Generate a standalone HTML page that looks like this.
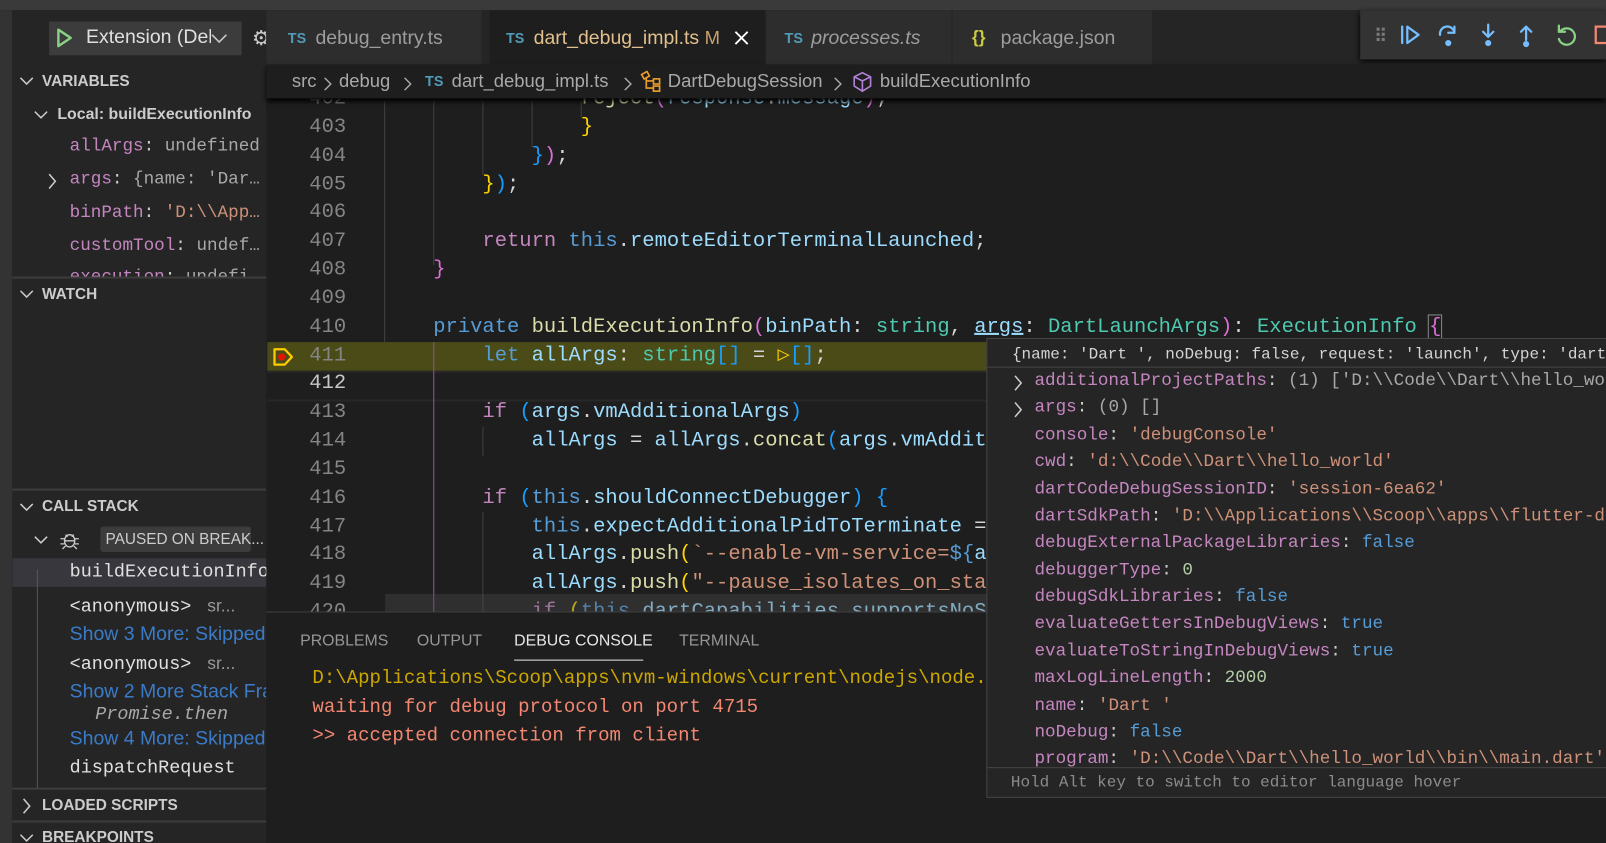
<!DOCTYPE html>
<html><head><meta charset="utf-8"><style>
html,body{margin:0;padding:0;width:1606px;height:843px;overflow:hidden;background:#1e1e1e}
#root{position:absolute;left:0;top:0;width:1568px;height:823px;transform:scale(1.02423);transform-origin:0 0;overflow:hidden;background:#1e1e1e;font-family:"Liberation Sans",sans-serif;color:#ccc}
.a{position:absolute;white-space:pre}
.m{font-family:"Liberation Mono",monospace}
.code{position:absolute;left:375px;font-family:"Liberation Mono",monospace;font-size:20px;line-height:28px;height:28px;white-space:pre;color:#d4d4d4}
.ln{position:absolute;left:270px;width:68px;text-align:right;font-family:"Liberation Mono",monospace;font-size:20px;line-height:28px;color:#858585}
.k{color:#569cd6}.c{color:#c586c0}.v{color:#9cdcfe}.f{color:#dcdcaa}.t{color:#4ec9b0}.s{color:#ce9178}.n{color:#b5cea8}
.b1{color:#ffd700}.b2{color:#da70d6}.b3{color:#179fff}
.hd{font-weight:bold;font-size:15px;color:#ccc}
.hr{position:absolute;left:1010px;font-family:"Liberation Mono",monospace;font-size:17.2px;line-height:22px;white-space:pre;color:#ccc}
.hn{color:#c586c0}
.sv{position:absolute;font-family:"Liberation Mono",monospace;font-size:17.2px;line-height:22px;white-space:pre}
.lk{color:#3a7bc8;font-size:19px;font-family:"Liberation Sans",sans-serif}
</style></head><body><div id="root">

<div class="a" style="left:0;top:0;width:1568px;height:10px;background:#3a3a3a"></div>
<div class="a" style="left:0;top:10px;width:12px;height:813px;background:#333"></div>
<div class="a" style="left:12px;top:10px;width:248px;height:813px;background:#252526;overflow:hidden">
<div style="position:absolute;left:-12px;top:-10px;width:300px;height:823px">
<div class="a" style="left:48px;top:21px;width:188px;height:33px;background:#3c3c3c"></div>
<svg class="a" style="left:55px;top:27px" width="16" height="20"><path d="M2 2 L14 10 L2 18 Z" fill="none" stroke="#89d185" stroke-width="2.4" stroke-linejoin="round"/></svg>
<div class="a" style="left:84px;top:26px;font-size:19px;color:#e0e0e0;width:122px;overflow:hidden">Extension (Del</div>
<svg class="a" style="left:206px;top:32px" width="16" height="12"><path d="M1 2 L8 9 L15 2" fill="none" stroke="#ccc" stroke-width="1.5"/></svg>
<div class="a" style="left:246px;top:25px;font-size:20px;color:#ccc">⚙</div>

<svg class="a" style="left:19px;top:74px" width="14" height="10"><path d="M1 2 L7 8 L13 2" fill="none" stroke="#ccc" stroke-width="1.5"/></svg>
<div class="a hd" style="left:41px;top:71px">VARIABLES</div>
<svg class="a" style="left:33px;top:107px" width="14" height="10"><path d="M1 2 L7 8 L13 2" fill="none" stroke="#ccc" stroke-width="1.5"/></svg>
<div class="a hd" style="left:56px;top:103px;font-size:15.5px">Local: buildExecutionInfo</div>
<div class="sv" style="left:68px;top:133px"><span class="hn">allArgs</span><span style="color:#ccc">: </span><span style="color:#a8a8a8">undefined</span></div>
<svg class="a" style="left:46px;top:169px" width="10" height="16"><path d="M2 1 L8 8 L2 15" fill="none" stroke="#ccc" stroke-width="1.5"/></svg>
<div class="sv" style="left:68px;top:165px"><span class="hn">args</span><span style="color:#ccc">: </span><span style="color:#a8a8a8">{name: 'Dar…</span></div>
<div class="sv" style="left:68px;top:198px"><span class="hn">binPath</span><span style="color:#ccc">: </span><span class="s">'D:\\App…</span></div>
<div class="sv" style="left:68px;top:230px"><span class="hn">customTool</span><span style="color:#ccc">: </span><span style="color:#a8a8a8">undef…</span></div>
<div class="a" style="left:12px;top:255px;width:248px;height:15px;overflow:hidden"><div class="sv" style="left:56px;top:6px"><span class="hn">execution</span>: <span style="color:#a8a8a8">undefi…</span></div></div>
<div class="a" style="left:12px;top:270px;width:248px;height:2px;background:#3c3c3c"></div>
<svg class="a" style="left:19px;top:282px" width="14" height="10"><path d="M1 2 L7 8 L13 2" fill="none" stroke="#ccc" stroke-width="1.5"/></svg>
<div class="a hd" style="left:41px;top:279px">WATCH</div>
<div class="a" style="left:12px;top:477px;width:248px;height:2px;background:#3c3c3c"></div>
<svg class="a" style="left:19px;top:490px" width="14" height="10"><path d="M1 2 L7 8 L13 2" fill="none" stroke="#ccc" stroke-width="1.5"/></svg>
<div class="a hd" style="left:41px;top:486px">CALL STACK</div>
<svg class="a" style="left:33px;top:522px" width="14" height="10"><path d="M1 2 L7 8 L13 2" fill="none" stroke="#ccc" stroke-width="1.5"/></svg>
<svg class="a" style="left:57px;top:516px" width="22" height="22"><g fill="none" stroke="#ccc" stroke-width="1.3"><ellipse cx="11" cy="12" rx="5" ry="6"/><path d="M7 6 L9 8 M15 6 L13 8 M2 10 H6 M16 10 H20 M2 15 H6 M16 15 H20 M4 20 L7 17 M18 20 L15 17 M6 12 H16"/></g></svg>
<div class="a" style="left:98px;top:514px;width:147px;height:25px;background:#3c3c3c;border-radius:3px"></div>
<div class="a" style="left:103px;top:518px;font-size:15px;color:#ccc">PAUSED ON BREAK...</div>
<div class="a" style="left:12px;top:545px;width:248px;height:28px;background:#37373d"></div>
<div class="a" style="left:36px;top:556px;width:1px;height:214px;background:#585858"></div>
<div class="sv" style="left:68px;top:548px;font-size:18px;color:#e0e0e0">buildExecutionInfo</div>
<div class="sv" style="left:68px;top:581px;font-size:18px;color:#e0e0e0">&lt;anonymous&gt; <span style="color:#999;font-family:'Liberation Sans',sans-serif;font-size:17px"> sr...</span></div>
<div class="a lk" style="left:68px;top:609px">Show 3 More: Skipped</div>
<div class="sv" style="left:68px;top:637px;font-size:18px;color:#e0e0e0">&lt;anonymous&gt; <span style="color:#999;font-family:'Liberation Sans',sans-serif;font-size:17px"> sr...</span></div>
<div class="a lk" style="left:68px;top:665px">Show 2 More Stack Frames</div>
<div class="sv" style="left:93px;top:687px;font-size:18px;color:#a8a8a8;font-style:italic">Promise.then</div>
<div class="a lk" style="left:68px;top:711px">Show 4 More: Skipped</div>
<div class="sv" style="left:68px;top:739px;font-size:18px;color:#e0e0e0">dispatchRequest</div>
<div class="a" style="left:12px;top:769px;width:248px;height:2px;background:#3c3c3c"></div>
<svg class="a" style="left:21px;top:779px" width="10" height="16"><path d="M2 1 L8 8 L2 15" fill="none" stroke="#ccc" stroke-width="1.5"/></svg>
<div class="a hd" style="left:41px;top:778px">LOADED SCRIPTS</div>
<div class="a" style="left:12px;top:801px;width:248px;height:2px;background:#3c3c3c"></div>
<svg class="a" style="left:19px;top:813px" width="14" height="10"><path d="M1 2 L7 8 L13 2" fill="none" stroke="#ccc" stroke-width="1.5"/></svg>
<div class="a hd" style="left:41px;top:809px">BREAKPOINTS</div>
</div></div>

<div class="a" style="left:260px;top:10px;width:1308px;height:53px;background:#252526"></div>
<div class="a" style="left:260px;top:10px;width:210px;height:53px;background:#2d2d2d"></div>
<div class="a" style="left:478px;top:10px;width:269px;height:53px;background:#1e1e1e"></div>
<div class="a" style="left:748px;top:10px;width:181px;height:53px;background:#2d2d2d"></div>
<div class="a" style="left:930px;top:10px;width:195px;height:53px;background:#2d2d2d"></div>
<div class="a" style="left:281px;top:29px;font-size:14px;font-weight:bold;color:#519aba">TS</div>
<div class="a" style="left:308px;top:27px;font-size:19px;color:#9d9d9d">debug_entry.ts</div>
<div class="a" style="left:494px;top:29px;font-size:14px;font-weight:bold;color:#519aba">TS</div>
<div class="a" style="left:521px;top:27px;font-size:19px;color:#e2c08d">dart_debug_impl.ts</div>
<div class="a" style="left:688px;top:27px;font-size:18px;color:#c8a26f">M</div>
<svg class="a" style="left:717px;top:30px" width="14" height="14"><path d="M1 1 L13 13 M13 1 L1 13" stroke="#fff" stroke-width="1.8"/></svg>
<div class="a" style="left:766px;top:29px;font-size:14px;font-weight:bold;color:#519aba">TS</div>
<div class="a" style="left:792px;top:27px;font-size:19px;color:#9d9d9d;font-style:italic">processes.ts</div>
<div class="a" style="left:949px;top:27px;font-size:17px;font-weight:bold;color:#cbcb41">{}</div>
<div class="a" style="left:977px;top:27px;font-size:19px;color:#9d9d9d">package.json</div>

<div class="a" style="left:1328px;top:10px;width:240px;height:48px;background:#333;box-shadow:0 2px 6px #000"></div>
<svg class="a" style="left:1340px;top:22px" width="228" height="26">
<g fill="#7a7a7a"><rect x="4" y="5" width="3" height="3"/><rect x="9" y="5" width="3" height="3"/><rect x="4" y="10" width="3" height="3"/><rect x="9" y="10" width="3" height="3"/><rect x="4" y="15" width="3" height="3"/><rect x="9" y="15" width="3" height="3"/></g>
<g fill="none" stroke="#75beff" stroke-width="2.2" stroke-linecap="round" stroke-linejoin="round">
<path d="M29 4 V20"/><path d="M34 4 L45 12 L34 20 Z"/>
<path d="M66 12 A7 7 0 0 1 80 10"/><path d="M80 4 V10 H74"/>
<path d="M113 2 V14 M108 9 L113 14 L118 9"/>
<path d="M150 17 V4 M145 9 L150 4 L155 9"/>
</g>
<g fill="#75beff"><circle cx="74" cy="20" r="3"/><circle cx="113" cy="20" r="3"/><circle cx="150" cy="21" r="3"/></g>
<g fill="none" stroke="#89d185" stroke-width="2.2" stroke-linecap="round"><path d="M184 8 A8 8 0 1 1 182 16"/><path d="M182 3 V9 H188"/></g>
<rect x="218" y="4" width="12" height="16" fill="none" stroke="#f48771" stroke-width="2.2"/>
</svg>

<div class="a" style="left:260px;top:63px;width:1308px;height:33px;background:#1e1e1e;box-shadow:0 3px 5px #000;z-index:3">
<div class="a" style="left:25px;top:6px;font-size:18px;color:#a9a9a9">src</div>
<svg class="a" style="left:55px;top:12px" width="10" height="14"><path d="M2 1 L8 7 L2 13" fill="none" stroke="#a9a9a9" stroke-width="1.4"/></svg>
<div class="a" style="left:71px;top:6px;font-size:18px;color:#a9a9a9">debug</div>
<svg class="a" style="left:133px;top:12px" width="10" height="14"><path d="M2 1 L8 7 L2 13" fill="none" stroke="#a9a9a9" stroke-width="1.4"/></svg>
<div class="a" style="left:155px;top:8px;font-size:14px;font-weight:bold;color:#519aba">TS</div>
<div class="a" style="left:181px;top:6px;font-size:18px;color:#a9a9a9">dart_debug_impl.ts</div>
<svg class="a" style="left:348px;top:12px" width="10" height="14"><path d="M2 1 L8 7 L2 13" fill="none" stroke="#a9a9a9" stroke-width="1.4"/></svg>
<svg class="a" style="left:365px;top:6px" width="22" height="22"><g fill="none" stroke="#ee9d28" stroke-width="1.6"><rect x="2" y="2" width="6" height="5" transform="rotate(-30 5 4)"/><rect x="13" y="8" width="6" height="5"/><rect x="13" y="15" width="6" height="5"/><path d="M6 7 V17 H13 M6 10 H13"/></g></svg>
<div class="a" style="left:392px;top:6px;font-size:18px;color:#a9a9a9">DartDebugSession</div>
<svg class="a" style="left:553px;top:12px" width="10" height="14"><path d="M2 1 L8 7 L2 13" fill="none" stroke="#a9a9a9" stroke-width="1.4"/></svg>
<svg class="a" style="left:572px;top:6px" width="20" height="22"><g fill="none" stroke="#b180d7" stroke-width="1.6" stroke-linejoin="round"><path d="M10 2 L18 6 V15 L10 20 L2 15 V6 Z"/><path d="M2 6 L10 10 L18 6 M10 10 V20"/></g></svg>
<div class="a" style="left:599px;top:6px;font-size:18px;color:#a9a9a9">buildExecutionInfo</div>
</div>

<div class="a" style="left:260px;top:96px;width:1308px;height:501px;overflow:hidden">
<div style="position:absolute;left:-260px;top:-93px;width:1568px;height:823px">
<div class="a" style="left:261px;top:331px;width:714px;height:28px;background:#4b4b18"></div>
<div class="a" style="left:261px;top:359px;width:800px;height:26px;border-top:2px solid #282828;border-bottom:2px solid #282828"></div>
<div class="a" style="left:375px;top:96px;width:1px;height:235px;background:#404040"></div>
<div class="a" style="left:423px;top:96px;width:1px;height:160px;background:#404040"></div>
<div class="a" style="left:471px;top:96px;width:1px;height:72px;background:#404040"></div>
<div class="a" style="left:519px;top:96px;width:1px;height:45px;background:#404040"></div>
<div class="a" style="left:567px;top:96px;width:1px;height:16px;background:#404040"></div>
<div class="a" style="left:423px;top:331px;width:1px;height:270px;background:#a14a9e"></div>
<div class="a" style="left:471px;top:414px;width:1px;height:28px;background:#404040"></div>
<div class="a" style="left:471px;top:497px;width:1px;height:110px;background:#404040"></div>

<div class="ln" style="top:80px">402</div>
<div class="ln" style="top:108px">403</div>
<div class="ln" style="top:136px">404</div>
<div class="ln" style="top:164px">405</div>
<div class="ln" style="top:191px">406</div>
<div class="ln" style="top:219px">407</div>
<div class="ln" style="top:247px">408</div>
<div class="ln" style="top:275px">409</div>
<div class="ln" style="top:303px">410</div>
<div class="ln" style="top:331px">411</div>
<div class="ln" style="top:358px;color:#c6c6c6">412</div>
<div class="ln" style="top:386px">413</div>
<div class="ln" style="top:414px">414</div>
<div class="ln" style="top:442px">415</div>
<div class="ln" style="top:470px">416</div>
<div class="ln" style="top:498px">417</div>
<div class="ln" style="top:525px">418</div>
<div class="ln" style="top:553px">419</div>
<div class="ln" style="top:581px">420</div>
<svg class="a" style="left:266px;top:336px" width="22" height="19"><path d="M2 2 H12 L19 9.5 L12 17 H2 Z" fill="none" stroke="#ffcc00" stroke-width="2.2" stroke-linejoin="round"/><circle cx="9" cy="9.5" r="3.5" fill="#e51400"/></svg>

<div class="code" style="top:80px">                <span class="f">reject</span><span class="b2">(</span><span class="v">response</span>.<span class="v">message</span><span class="b2">)</span>;</div>
<div class="code" style="top:108px">                <span class="b1">}</span></div>
<div class="code" style="top:136px">            <span class="b3">}</span><span class="b2">)</span>;</div>
<div class="code" style="top:164px">        <span class="b1">}</span><span class="b3">)</span>;</div>
<div class="code" style="top:219px">        <span class="c">return</span> <span class="k">this</span>.<span class="v">remoteEditorTerminalLaunched</span>;</div>
<div class="code" style="top:247px">    <span class="b2">}</span></div>
<div class="code" style="top:303px">    <span class="k">private</span> <span class="f">buildExecutionInfo</span><span class="b2">(</span><span class="v">binPath</span>: <span class="t">string</span>, <span class="v" style="text-decoration:underline">args</span>: <span class="t">DartLaunchArgs</span><span class="b2">)</span>: <span class="t">ExecutionInfo</span> <span class="b2" style="outline:1px solid #888">{</span></div>
<div class="code" style="top:331px">        <span class="k">let</span> <span class="v">allArgs</span>: <span class="t">string</span><span class="b3">[]</span> = <span style="color:#ffcc00">▷</span><span class="b3">[]</span>;</div>
<div class="code" style="top:386px">        <span class="c">if</span> <span class="b3">(</span><span class="v">args</span>.<span class="v">vmAdditionalArgs</span><span class="b3">)</span></div>
<div class="code" style="top:414px">            <span class="v">allArgs</span> = <span class="v">allArgs</span>.<span class="f">concat</span><span class="b3">(</span><span class="v">args</span>.<span class="v">vmAdditionalArgs</span><span class="b3">)</span>;</div>
<div class="code" style="top:470px">        <span class="c">if</span> <span class="b3">(</span><span class="k">this</span>.<span class="v">shouldConnectDebugger</span><span class="b3">)</span> <span class="b3">{</span></div>
<div class="code" style="top:498px">            <span class="k">this</span>.<span class="v">expectAdditionalPidToTerminate</span> = <span class="k">true</span>;</div>
<div class="code" style="top:525px">            <span class="v">allArgs</span>.<span class="f">push</span><span class="b1">(</span><span class="s">`--enable-vm-service=</span><span class="k">${</span><span class="v">allow</span><span class="k">}</span><span class="s">`</span><span class="b1">)</span>;</div>
<div class="code" style="top:553px">            <span class="v">allArgs</span>.<span class="f">push</span><span class="b1">(</span><span class="s">"--pause_isolates_on_start=true"</span><span class="b1">)</span>;</div>
<div class="code" style="top:581px">            <span class="c">if</span> <span class="b1">(</span><span class="k">this</span>.<span class="v">dartCapabilities</span>.<span class="v">supportsNoServeDevTools</span><span class="b1">)</span></div>
<div class="a" style="left:376px;top:577px;width:1192px;height:20px;background:rgba(80,80,80,.35)"></div>
</div></div>

<div class="a" style="left:260px;top:597px;width:1308px;height:226px;background:#1e1e1e;border-top:1px solid #414141"></div>
<div class="a" style="left:293px;top:617px;font-size:15.5px;color:#969696">PROBLEMS</div>
<div class="a" style="left:407px;top:617px;font-size:15.5px;color:#969696">OUTPUT</div>
<div class="a" style="left:502px;top:617px;font-size:15.5px;color:#e7e7e7">DEBUG CONSOLE</div>
<div class="a" style="left:502px;top:644px;width:126px;height:1px;background:#e7e7e7"></div>
<div class="a" style="left:663px;top:617px;font-size:15.5px;color:#969696">TERMINAL</div>
<div class="a m" style="left:305px;top:651px;font-size:18.6px;line-height:24px;color:#cca700">D:\Applications\Scoop\apps\nvm-windows\current\nodejs\node.exe</div>
<div class="a m" style="left:305px;top:679px;font-size:18.6px;line-height:24px;color:#f48771">waiting for debug protocol on port 4715</div>
<div class="a m" style="left:305px;top:707px;font-size:18.6px;line-height:24px;color:#f48771">&gt;&gt; accepted connection from client</div>

<div class="a" style="left:963px;top:330px;width:620px;height:447px;background:#252526;border:1px solid #454545;overflow:hidden;z-index:5">
<div style="position:absolute;left:-964px;top:-331px;width:1568px;height:823px">
<div class="a m" style="left:988px;top:335px;font-size:15.6px;line-height:22px;color:#d4d4d4">{name: 'Dart ', noDebug: false, request: 'launch', type: 'dart'}</div>
<div class="a" style="left:964px;top:358px;width:620px;height:1px;background:#454545"></div>
<svg class="a" style="left:989px;top:366px" width="10" height="16"><path d="M2 1 L8 8 L2 15" fill="none" stroke="#ccc" stroke-width="1.5"/></svg>
<div class="hr" style="top:362px"><span class="hn">additionalProjectPaths</span>: <span style="color:#a8a8a8">(1) ['D:\\Code\\Dart\\hello_world']</span></div>
<svg class="a" style="left:989px;top:392px" width="10" height="16"><path d="M2 1 L8 8 L2 15" fill="none" stroke="#ccc" stroke-width="1.5"/></svg>
<div class="hr" style="top:388px"><span class="hn">args</span>: <span style="color:#a8a8a8">(0) []</span></div>
<div class="hr" style="top:415px"><span class="hn">console</span>: <span class="s">'debugConsole'</span></div>
<div class="hr" style="top:441px"><span class="hn">cwd</span>: <span class="s">'d:\\Code\\Dart\\hello_world'</span></div>
<div class="hr" style="top:468px"><span class="hn">dartCodeDebugSessionID</span>: <span class="s">'session-6ea62'</span></div>
<div class="hr" style="top:494px"><span class="hn">dartSdkPath</span>: <span class="s">'D:\\Applications\\Scoop\\apps\\flutter-dev'</span></div>
<div class="hr" style="top:520px"><span class="hn">debugExternalPackageLibraries</span>: <span class="k">false</span></div>
<div class="hr" style="top:547px"><span class="hn">debuggerType</span>: <span class="n">0</span></div>
<div class="hr" style="top:573px"><span class="hn">debugSdkLibraries</span>: <span class="k">false</span></div>
<div class="hr" style="top:599px"><span class="hn">evaluateGettersInDebugViews</span>: <span class="k">true</span></div>
<div class="hr" style="top:626px"><span class="hn">evaluateToStringInDebugViews</span>: <span class="k">true</span></div>
<div class="hr" style="top:652px"><span class="hn">maxLogLineLength</span>: <span class="n">2000</span></div>
<div class="hr" style="top:679px"><span class="hn">name</span>: <span class="s">'Dart '</span></div>
<div class="hr" style="top:705px"><span class="hn">noDebug</span>: <span class="k">false</span></div>
<div class="a" style="left:964px;top:731px;width:620px;height:18px;overflow:hidden"><div class="hr" style="left:46px;top:0px"><span class="hn">program</span>: <span class="s">'D:\\Code\\Dart\\hello_world\\bin\\main.dart'</span></div></div>
<div class="a" style="left:964px;top:749px;width:620px;height:1px;background:#454545"></div>
<div class="a m" style="left:987px;top:754px;font-size:15.6px;line-height:20px;color:#8b8b8b">Hold Alt key to switch to editor language hover</div>
</div></div>

</div></body></html>
